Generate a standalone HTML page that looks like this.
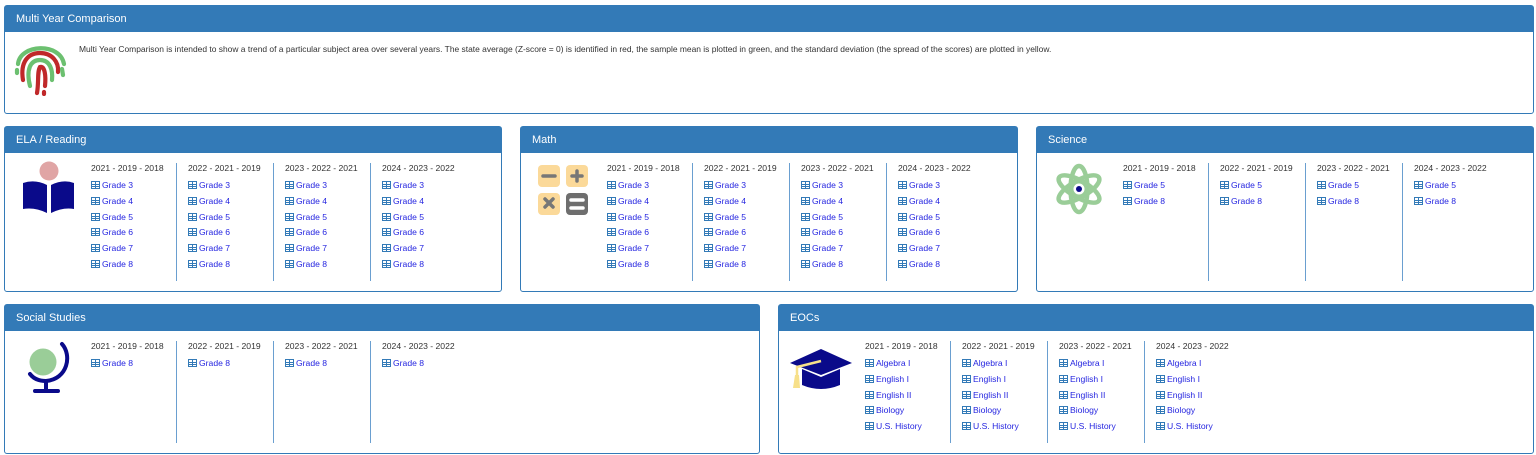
<!DOCTYPE html>
<html><head><meta charset="utf-8"><style>
*{box-sizing:border-box;margin:0;padding:0}
body{width:1536px;height:455px;background:#fff;font-family:"Liberation Sans",Arial,sans-serif;position:relative;overflow:hidden}
.p{position:absolute;border:1px solid #337ab7;border-radius:3px;background:#fff}
.h{background:#337ab7;color:#fff;font-size:11px;height:26px;line-height:26px;padding-left:11px}
.ic{position:absolute}
.cols{position:absolute;left:75px;display:flex}
.col{width:97px;border-right:1px solid #6a9fd0;padding-left:11px;font-size:8.6px;color:#333}
.col:last-child{border-right:none}
.col .t{height:17px;line-height:9px;padding-top:1px}
.col a{display:block;color:#2525e0;text-decoration:none;height:15.8px;line-height:9px;white-space:nowrap;padding-top:1px}
.g{display:inline-block;width:9px;height:8px;border:1px solid #337ab7;vertical-align:-1px;margin-right:2px;background:linear-gradient(#337ab7,#337ab7) 3px 0/1px 100% no-repeat,linear-gradient(#337ab7,#337ab7) 0 2px/100% 1px no-repeat,linear-gradient(#337ab7,#337ab7) 0 4px/100% 1px no-repeat;}
</style></head><body>

<div class="p" style="left:4px;top:5px;width:1530px;height:109px">
<div class="h">Multi Year Comparison</div>
<svg class="ic" style="left:9px;top:34px" width="54" height="56" viewBox="0 0 54 56" fill="none" stroke-linecap="round" stroke-width="4.2">
<path d="M4 24 C6 4 46 2 50 24" stroke="#6cc070"/>
<path d="M3 30 L3 33" stroke="#6cc070"/>
<path d="M9 40 C6 22 14 13 26 13 C38 13 45 22 44 32" stroke="#c0282a"/>
<path d="M48 29 L49 35" stroke="#6cc070"/>
<path d="M16 46 C12 30 16 20 26 20 C36 20 39 30 38 40" stroke="#6cc070"/>
<path d="M23 53 C25 42 23 32 26 27 C31 26 32 36 31 46" stroke="#c0282a"/>
<path d="M30 52 L30 54" stroke="#c0282a"/>
</svg>
<div style="position:absolute;left:74px;top:38px;font-size:8.45px;color:#333;white-space:nowrap">Multi Year Comparison is intended to show a trend of a particular subject area over several years. The state average (Z-score = 0) is identified in red, the sample mean is plotted in green, and the standard deviation (the spread of the scores) are plotted in yellow.</div>
</div>

<!-- ELA -->
<div class="p" style="left:4px;top:126px;width:498px;height:166px">
<div class="h">ELA / Reading</div>
<svg class="ic" style="left:16px;top:34px" width="54" height="54" viewBox="0 0 54 54">
<circle cx="28" cy="10" r="9.5" fill="#e0a5a5"/>
<path d="M2 22 Q14 18 26 24 L26 52 Q14 46 2 48 Z" fill="#0a0a8a"/>
<path d="M30 24 Q42 18 53 22 L53 48 Q42 46 30 52 Z" fill="#0a0a8a"/>
</svg>
<div class="cols" style="top:36px">
<div class="col" style="height:118px"><div class="t">2021 - 2019 - 2018</div><a><i class="g"></i>Grade 3</a><a><i class="g"></i>Grade 4</a><a><i class="g"></i>Grade 5</a><a><i class="g"></i>Grade 6</a><a><i class="g"></i>Grade 7</a><a><i class="g"></i>Grade 8</a></div>
<div class="col" style="height:118px"><div class="t">2022 - 2021 - 2019</div><a><i class="g"></i>Grade 3</a><a><i class="g"></i>Grade 4</a><a><i class="g"></i>Grade 5</a><a><i class="g"></i>Grade 6</a><a><i class="g"></i>Grade 7</a><a><i class="g"></i>Grade 8</a></div>
<div class="col" style="height:118px"><div class="t">2023 - 2022 - 2021</div><a><i class="g"></i>Grade 3</a><a><i class="g"></i>Grade 4</a><a><i class="g"></i>Grade 5</a><a><i class="g"></i>Grade 6</a><a><i class="g"></i>Grade 7</a><a><i class="g"></i>Grade 8</a></div>
<div class="col" style="height:118px"><div class="t">2024 - 2023 - 2022</div><a><i class="g"></i>Grade 3</a><a><i class="g"></i>Grade 4</a><a><i class="g"></i>Grade 5</a><a><i class="g"></i>Grade 6</a><a><i class="g"></i>Grade 7</a><a><i class="g"></i>Grade 8</a></div>
</div>
</div>

<!-- Math -->
<div class="p" style="left:520px;top:126px;width:498px;height:166px">
<div class="h">Math</div>
<svg class="ic" style="left:16px;top:37px" width="54" height="54" viewBox="0 0 54 54">
<rect x="1" y="1" width="22" height="22" rx="4" fill="#fbd999"/>
<rect x="29" y="1" width="22" height="22" rx="4" fill="#fbd999"/>
<rect x="1" y="29" width="22" height="22" rx="4" fill="#fbd999"/>
<rect x="29" y="29" width="22" height="22" rx="4" fill="#6e6e6e"/>
<path d="M6 12H18M35 12H45M40 7V17M8 35L16 43M16 35L8 43" stroke="#777" stroke-width="3.5" stroke-linecap="round"/>
<path d="M34 36H46M34 44H46" stroke="#fff" stroke-width="3.5" stroke-linecap="round"/>
</svg>
<div class="cols" style="top:36px">
<div class="col" style="height:118px"><div class="t">2021 - 2019 - 2018</div><a><i class="g"></i>Grade 3</a><a><i class="g"></i>Grade 4</a><a><i class="g"></i>Grade 5</a><a><i class="g"></i>Grade 6</a><a><i class="g"></i>Grade 7</a><a><i class="g"></i>Grade 8</a></div>
<div class="col" style="height:118px"><div class="t">2022 - 2021 - 2019</div><a><i class="g"></i>Grade 3</a><a><i class="g"></i>Grade 4</a><a><i class="g"></i>Grade 5</a><a><i class="g"></i>Grade 6</a><a><i class="g"></i>Grade 7</a><a><i class="g"></i>Grade 8</a></div>
<div class="col" style="height:118px"><div class="t">2023 - 2022 - 2021</div><a><i class="g"></i>Grade 3</a><a><i class="g"></i>Grade 4</a><a><i class="g"></i>Grade 5</a><a><i class="g"></i>Grade 6</a><a><i class="g"></i>Grade 7</a><a><i class="g"></i>Grade 8</a></div>
<div class="col" style="height:118px"><div class="t">2024 - 2023 - 2022</div><a><i class="g"></i>Grade 3</a><a><i class="g"></i>Grade 4</a><a><i class="g"></i>Grade 5</a><a><i class="g"></i>Grade 6</a><a><i class="g"></i>Grade 7</a><a><i class="g"></i>Grade 8</a></div>
</div>
</div>

<!-- Science -->
<div class="p" style="left:1036px;top:126px;width:498px;height:166px">
<div class="h">Science</div>
<svg class="ic" style="left:17px;top:35px" width="50" height="54" viewBox="0 0 50 54">
<g fill="none" stroke="#9acd98" stroke-width="4.5">
<ellipse cx="25" cy="27" rx="8.5" ry="23"/>
<ellipse cx="25" cy="27" rx="8.5" ry="23" transform="rotate(60 25 27)"/>
<ellipse cx="25" cy="27" rx="8.5" ry="23" transform="rotate(-60 25 27)"/>
</g>
<circle cx="25" cy="27" r="8" fill="#9acd98"/>
<circle cx="25" cy="27" r="5.5" fill="#fff"/>
<circle cx="25" cy="27" r="3" fill="#0a0a8a"/>
</svg>
<div class="cols" style="top:36px">
<div class="col" style="height:118px"><div class="t">2021 - 2019 - 2018</div><a><i class="g"></i>Grade 5</a><a><i class="g"></i>Grade 8</a></div>
<div class="col" style="height:118px"><div class="t">2022 - 2021 - 2019</div><a><i class="g"></i>Grade 5</a><a><i class="g"></i>Grade 8</a></div>
<div class="col" style="height:118px"><div class="t">2023 - 2022 - 2021</div><a><i class="g"></i>Grade 5</a><a><i class="g"></i>Grade 8</a></div>
<div class="col" style="height:118px"><div class="t">2024 - 2023 - 2022</div><a><i class="g"></i>Grade 5</a><a><i class="g"></i>Grade 8</a></div>
</div>
</div>

<!-- Social -->
<div class="p" style="left:4px;top:304px;width:756px;height:150px">
<div class="h">Social Studies</div>
<svg class="ic" style="left:19px;top:36px" width="50" height="54" viewBox="0 0 50 54">
<circle cx="19" cy="21" r="13.5" fill="#9acd98"/>
<path d="M38 3 C48 14 44 38 22 40 C14 40 9 37 6 33" fill="none" stroke="#0a0a8a" stroke-width="4" stroke-linecap="round"/>
<path d="M22 40 V50 M11 50 H34" fill="none" stroke="#0a0a8a" stroke-width="4" stroke-linecap="round"/>
</svg>
<div class="cols" style="top:36px">
<div class="col" style="height:102px"><div class="t">2021 - 2019 - 2018</div><a><i class="g"></i>Grade 8</a></div>
<div class="col" style="height:102px"><div class="t">2022 - 2021 - 2019</div><a><i class="g"></i>Grade 8</a></div>
<div class="col" style="height:102px"><div class="t">2023 - 2022 - 2021</div><a><i class="g"></i>Grade 8</a></div>
<div class="col" style="height:102px"><div class="t">2024 - 2023 - 2022</div><a><i class="g"></i>Grade 8</a></div>
</div>
</div>

<!-- EOCs -->
<div class="p" style="left:778px;top:304px;width:756px;height:150px">
<div class="h">EOCs</div>
<svg class="ic" style="left:9px;top:40px" width="66" height="48" viewBox="0 0 66 48">
<path d="M2 18 L33 4 L64 18 L33 30 Z" fill="#0a0a8a"/>
<path d="M14 24 V40 Q33 48 52 40 V24 L33 32 Z" fill="#0a0a8a"/>
<path d="M33 16 L9 22 L9 36" fill="none" stroke="#f7e08a" stroke-width="2.5"/>
<path d="M7 30 L11 30 L12 43 L5 43 Z" fill="#f7e08a"/>
</svg>
<div class="cols" style="top:36px">
<div class="col" style="height:102px"><div class="t">2021 - 2019 - 2018</div><a><i class="g"></i>Algebra I</a><a><i class="g"></i>English I</a><a><i class="g"></i>English II</a><a><i class="g"></i>Biology</a><a><i class="g"></i>U.S. History</a></div>
<div class="col" style="height:102px"><div class="t">2022 - 2021 - 2019</div><a><i class="g"></i>Algebra I</a><a><i class="g"></i>English I</a><a><i class="g"></i>English II</a><a><i class="g"></i>Biology</a><a><i class="g"></i>U.S. History</a></div>
<div class="col" style="height:102px"><div class="t">2023 - 2022 - 2021</div><a><i class="g"></i>Algebra I</a><a><i class="g"></i>English I</a><a><i class="g"></i>English II</a><a><i class="g"></i>Biology</a><a><i class="g"></i>U.S. History</a></div>
<div class="col" style="height:102px"><div class="t">2024 - 2023 - 2022</div><a><i class="g"></i>Algebra I</a><a><i class="g"></i>English I</a><a><i class="g"></i>English II</a><a><i class="g"></i>Biology</a><a><i class="g"></i>U.S. History</a></div>
</div>
</div>

</body></html>
